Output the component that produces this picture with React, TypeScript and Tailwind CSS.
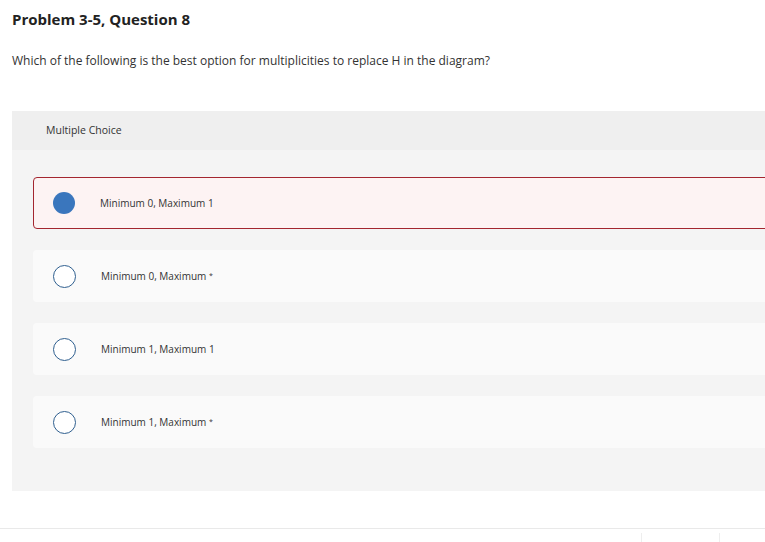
import React from 'react';

const options = [
    { label: 'Minimum 0, Maximum 1', selected: true },
    { label: 'Minimum 0, Maximum *', selected: false },
    { label: 'Minimum 1, Maximum 1', selected: false },
    { label: 'Minimum 1, Maximum *', selected: false },
];

export default function App() {
    return (
        <div className="w-[765px] h-[542px] overflow-hidden bg-white text-[#333] font-['Open_Sans','Lato',sans-serif]">
            <div className="w-[820px]">
                <h1 className="pl-3 pt-[9px] text-[15px] font-bold leading-[20px] text-[#222]">
                    Problem 3-5, Question 8
                </h1>
                <p className="pl-3 mt-[24px] text-[12px] leading-[16px] text-[#333]">
                    Which of the following is the best option for multiplicities to replace H in the diagram?
                </p>

                <div className="ml-3 mt-[42px] bg-[#f4f4f4]">
                    <div className="h-[39px] flex items-center pl-[34px] bg-[#efefef] text-[10.5px] text-[#333]">
                        Multiple Choice
                    </div>
                    <div className="pt-[27px] pb-[43px] pl-[21px] flex flex-col gap-[21px]">
                        {options.map((o) => (
                            <div
                                key={o.label}
                                className={
                                    o.selected
                                        ? 'h-[52px] flex items-center border border-[#a3262f] bg-[#fdf3f3] rounded-sm'
                                        : 'h-[52px] flex items-center border border-transparent bg-[#fafafa] rounded-sm'
                                }
                            >
                                {o.selected ? (
                                    <span className="ml-[19px] w-[22px] h-[22px] rounded-full bg-[#3a76bd]" />
                                ) : (
                                    <span className="ml-[19px] w-[23px] h-[23px] rounded-full border-[1.5px] border-[#2f5f8f] bg-white" />
                                )}
                                <span className="ml-[25px] text-[10px] text-[#333]">
                                    {o.label.endsWith('*') ? (
                                        <>
                                            {o.label.slice(0, -1)}
                                            <span className="text-[7px] align-[2px]">*</span>
                                        </>
                                    ) : (
                                        o.label
                                    )}
                                </span>
                            </div>
                        ))}
                    </div>
                </div>

                <div className="mt-[37px] border-t border-[#e9e9e9] relative h-[14px]">
                    <span className="absolute left-[641px] top-[4px] h-[10px] w-px bg-[#eeeeee]" />
                    <span className="absolute left-[719px] top-[4px] h-[10px] w-px bg-[#eeeeee]" />
                </div>
            </div>
        </div>
    );
}
